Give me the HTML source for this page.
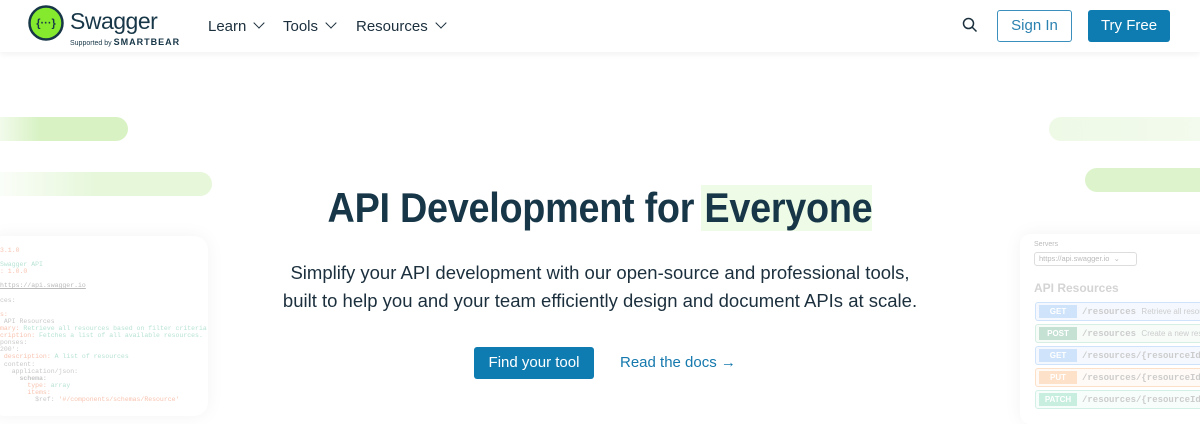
<!DOCTYPE html><html><head><style>
body{margin:0;width:1200px;height:408px;overflow:hidden;background:#fff;font-family:"Liberation Sans",sans-serif;position:relative}
.nav{position:absolute;left:0;top:0;width:1200px;height:52px;background:#fff;box-shadow:0 2px 6px rgba(0,0,0,.06)}
.a{position:absolute}
.menu{font-size:15px;color:#1b2f3d;top:18px}
.chev{display:inline-block;width:7px;height:7px;border-right:1.3px solid #1b2f3d;border-bottom:1.3px solid #1b2f3d;transform:rotate(45deg);margin-left:9px;position:relative;top:-4px}
.bar{position:absolute;height:24px;border-radius:12px;background:#dff5d0}
.code{font-family:"Liberation Mono",monospace;font-size:6.5px;line-height:7.1px;color:#c8c8c8;white-space:pre}
.o{color:#f8c3b0}.g{color:#b8e3d4}
.m{position:absolute;left:1035px;width:180px;height:17px;border:1px solid;border-radius:3px;font-family:"Liberation Mono",monospace;font-size:9px;line-height:17px;color:#ccc;font-weight:bold;white-space:nowrap;overflow:hidden}
.m span{display:inline-block;width:38px;height:13px;margin:2px 5px 0 3px;color:#fff;text-align:center;font-family:"Liberation Sans";font-size:8px;line-height:13px;vertical-align:top}
.m i{font-family:"Liberation Sans";font-weight:normal;font-style:normal;font-size:8px}
</style></head><body>
<div class="bar" style="left:-20px;top:117px;width:148px;background:linear-gradient(90deg,#fff,#d8f2c4 40%)"></div>
<div class="bar" style="left:-20px;top:172px;width:232px;background:linear-gradient(90deg,#fff,#e6f7da 50%)"></div>
<div class="bar" style="left:1049px;top:117px;width:170px;background:linear-gradient(90deg,#eef9e6,#f3fbee)"></div>
<div class="bar" style="left:1085px;top:168px;width:130px;background:#dcf3cb"></div>
<div class="a" style="left:-10px;top:236px;width:218px;height:180px;border-radius:14px;box-shadow:0 0 18px rgba(0,0,0,.05);background:#fff"></div>
<div class="a code" style="left:0;top:247px"><span class="o">3.1.0</span>

<span class="g">Swagger API</span>
<span class="o">: 1.0.0</span>

<u style="color:#bbb">https://api.swagger.io</u>

ces:

<span class="o">s:</span>
 API Resources
<span class="o">mary:</span> <span class="g">Retrieve all resources based on filter criteria</span>
<span class="o">cription:</span> <span class="g">Fetches a list of all available resources.</span>
ponses:
200':
 <span class="o">description:</span> <span class="g">A list of resources</span>
 content:
   application/json:
     <b>schema:</b>
       <span class="o">type:</span> <span class="g">array</span>
       <span class="o">items:</span>
         $ref: <span class="o">'#/components/schemas/Resource'</span></div>
<div class="a" style="left:1020px;top:234px;width:200px;height:190px;border-radius:10px;box-shadow:0 0 18px rgba(0,0,0,.05);background:#fff"></div>
<div class="a" style="left:1034px;top:241px;font-size:7px;color:#bbb">Servers</div>
<div class="a" style="left:1034px;top:252px;width:97px;height:12px;border:1px solid #ddd;border-radius:3px;font-size:7.5px;color:#bbb;line-height:12px;padding-left:4px">https://api.swagger.io &nbsp;⌄</div>
<div class="a" style="left:1034px;top:281px;font-size:12px;font-weight:bold;color:#d4d4d4">API Resources</div>
<div class="m" style="top:302px;border-color:#cfe3fb;background:#f5f9ff"><span style="background:#cfe4fb">GET</span>/resources <i>Retrieve all resources</i></div>
<div class="m" style="top:324px;border-color:#d6efe4;background:#f7fcf9"><span style="background:#c4e1d4">POST</span>/resources <i>Create a new resource</i></div>
<div class="m" style="top:346px;border-color:#cfe3fb;background:#f5f9ff"><span style="background:#cfe4fb">GET</span>/resources/{resourceId} <i>Retrieve</i></div>
<div class="m" style="top:368px;border-color:#fde0c8;background:#fffaf5"><span style="background:#fde1c9">PUT</span>/resources/{resourceId} <i>Update</i></div>
<div class="m" style="top:390px;border-color:#d2f0e6;background:#f7fdfb"><span style="background:#c8eee0">PATCH</span>/resources/{resourceId} <i>Patch</i></div>

<div class="nav"></div>
<svg class="a" style="left:28px;top:5px" width="36" height="36" viewBox="0 0 36 36"><circle cx="18" cy="18" r="16.5" fill="#85ea2d" stroke="#173647" stroke-width="2.5"/><text x="18" y="21.5" text-anchor="middle" font-family="Liberation Sans" font-weight="bold" font-size="11" fill="#173647">{···}</text></svg>
<div class="a" style="left:70px;top:8px;font-size:23px;color:#173647;letter-spacing:-.5px">Swagger</div>
<div class="a" style="left:70px;top:37px;font-size:7px;color:#173647">Supported by <b style="font-size:9px;letter-spacing:1px">SMARTBEAR</b></div>
<div class="a menu" style="left:208px">Learn<i class="chev"></i></div>
<div class="a menu" style="left:283px">Tools<i class="chev"></i></div>
<div class="a menu" style="left:356px">Resources<i class="chev"></i></div>
<svg class="a" style="left:962px;top:17px" width="16" height="16" viewBox="0 0 16 16"><circle cx="6.5" cy="6.5" r="5" fill="none" stroke="#1b2f3d" stroke-width="1.5"/><path d="M10 10l4.5 4.5" stroke="#1b2f3d" stroke-width="1.5"/></svg>
<div class="a" style="left:997px;top:10px;width:73px;height:30px;border:1.3px solid #3a8fbd;border-radius:3px;color:#2b81b0;font-size:15px;text-align:center;line-height:30px">Sign In</div>
<div class="a" style="left:1088px;top:10px;width:82px;height:32px;background:#0e7bb1;border-radius:3px;color:#fff;font-size:15px;text-align:center;line-height:32px">Try Free</div>

<div class="a" style="left:701px;top:185px;width:171px;height:46px;background:#eefbe6"></div>
<div class="a" style="left:0;width:1200px;top:184px;text-align:center;font-size:42px;font-weight:bold;color:#173647;letter-spacing:-.3px;transform:scaleX(.9);transform-origin:600px 0">API Development for Everyone</div>
<div class="a" style="left:0;width:1200px;top:259px;text-align:center;font-size:18.5px;line-height:28px;color:#1b2f3d">Simplify your API development with our open-source and professional tools,<br>built to help you and your team efficiently design and document APIs at scale.</div>
<div class="a" style="left:474px;top:347px;width:120px;height:32px;background:#0e7bb1;border-radius:3px;color:#fff;font-size:15px;text-align:center;line-height:32px">Find your tool</div>
<div class="a" style="left:620px;top:354px;font-size:15px;color:#1579ae">Read the docs →</div>
</body></html>
